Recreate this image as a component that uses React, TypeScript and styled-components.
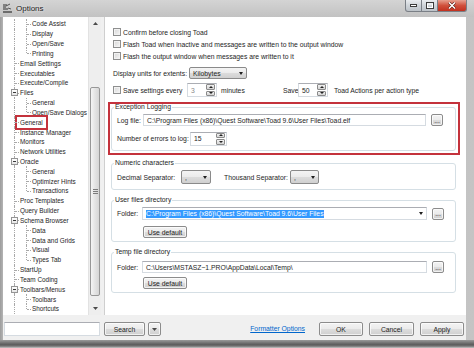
import styled, { createGlobalStyle, css } from "styled-components";

const GlobalStyle = createGlobalStyle`
  html, body {
    margin: 0;
    padding: 0;
    background: #bdbdbd;
  }
  body {
    font-family: "Liberation Sans", Arial, sans-serif;
    font-size: 6.8px;
    color: #1e1e1e;
  }
  * {
    box-sizing: border-box;
  }
`;

const Window = styled.div`
  width: 474px;
  height: 348px;
  display: flex;
  flex-direction: column;
  overflow: hidden;
  background: linear-gradient(90deg, #9c9c9c 0, #b4b4b4 3px, #c4c4c4 100%);
`;

const TitleBar = styled.div`
  height: 17px;
  flex: none;
  display: flex;
  align-items: flex-start;
  background: linear-gradient(#d4d4d4, #c2c2c2);
`;

const AppIcon = styled.svg`
  flex: none;
  margin: 3px 0 0 2px;
`;

const TitleText = styled.span`
  margin: 4px 0 0 3px;
  font-size: 8px;
  line-height: 9px;
  color: #1b1b1b;
  text-shadow: 0 0 3px rgba(255, 255, 255, 0.9);
`;

const Controls = styled.div`
  display: flex;
  margin: 0 7px 0 auto;
`;

const CtrlButton = styled.div<{ $w: number; $close?: boolean }>`
  width: ${(p) => p.$w}px;
  height: 12px;
  display: flex;
  align-items: center;
  justify-content: center;
  border: 1px solid #7a7f86;
  border-top: none;
  margin-left: -1px;
  ${(p) =>
    p.$close
      ? css`
          background: linear-gradient(#e7a08f, #d0503c 50%, #c2301f);
          border-radius: 0 0 3px 0;
        `
      : css`
          background: linear-gradient(#e9ecef, #cfd4d9 50%, #bcc2c8);
        `}
  &:first-child {
    border-radius: 0 0 0 3px;
  }
`;

const Client = styled.div`
  flex: 1;
  display: flex;
  flex-direction: column;
  margin: 0 8px 0 3px;
  background: #f0f0f0;
`;

const MainRow = styled.div`
  height: 298px;
  flex: none;
  display: flex;
  gap: 3px;
`;

const TreePanel = styled.div`
  width: 98px;
  flex: none;
  display: flex;
  background: #fff;
`;

const TreeList = styled.div`
  flex: 1;
  padding-top: 2px;
  overflow: hidden;
  font-size: 6.4px;
`;

const TreeRow = styled.div`
  height: 9.83px;
  display: flex;
  align-items: center;
  padding-left: 5px;
  white-space: nowrap;
`;

const Guide = styled.span<{ $line: "full" | "top"; $branch?: boolean }>`
  position: relative;
  flex: none;
  width: 12px;
  height: 100%;
  &::before {
    content: "";
    position: absolute;
    left: 6px;
    top: 0;
    height: ${(p) => (p.$line === "top" ? "50%" : "100%")};
    border-left: 1px dotted #a8a8a8;
  }
  &::after {
    content: "";
    display: ${(p) => (p.$branch ? "block" : "none")};
    position: absolute;
    left: 7px;
    top: 50%;
    width: 4px;
    border-top: 1px dotted #a8a8a8;
  }
`;

const Expander = styled.span`
  position: absolute;
  z-index: 1;
  left: 3px;
  top: 50%;
  width: 7px;
  height: 7px;
  margin-top: -3.5px;
  border: 1px solid #959595;
  background: linear-gradient(#ffffff, #e6e6e6);
  &::after {
    content: "";
    position: absolute;
    left: 1px;
    right: 1px;
    top: 2px;
    border-top: 1px solid #3a3a3a;
  }
`;

const NodeLabel = styled.span<{ $selected?: boolean }>`
  line-height: 9px;
  ${(p) =>
    p.$selected &&
    css`
      margin-left: -3px;
      padding: 1px 3px;
      outline: 2px solid #c4323c;
    `}
`;

const ScrollBar = styled.div`
  width: 13px;
  flex: none;
  display: flex;
  flex-direction: column;
  background: #eeeeee;
  border-left: 1px solid #e2e2e2;
`;

const ScrollArrow = styled.div<{ $bottom?: boolean }>`
  height: 13px;
  flex: none;
  display: flex;
  align-items: center;
  justify-content: center;
  margin-top: ${(p) => (p.$bottom ? "auto" : "0")};
`;

const ScrollThumb = styled.div`
  margin: 57px 1px 0;
  height: 209px;
  display: flex;
  flex-direction: column;
  align-items: center;
  justify-content: center;
  gap: 1px;
  border: 1px solid #979797;
  border-radius: 2px;
  background: linear-gradient(90deg, #f5f5f5, #e4e4e4 50%, #d6d6d6);
  span {
    width: 5px;
    border-top: 1px solid #7c7c7c;
  }
`;

const RightPanel = styled.div`
  flex: 1;
  padding: 9px 6px 0 3px;
  background: #fff;
  border-left: 1px solid #cfcfcf;
  white-space: nowrap;
`;

const CheckRow = styled.div<{ $mt?: number }>`
  height: ${(p) => (p.$mt ? 14 : 12)}px;
  margin-top: ${(p) => p.$mt ?? 0}px;
  display: flex;
  align-items: center;
  padding-left: 5px;
`;

const CheckBox = styled.span`
  width: 8px;
  height: 8px;
  flex: none;
  margin-right: 2px;
  border: 1px solid #8e8f8f;
  background: linear-gradient(135deg, #d6d6d6, #f7f7f7);
  box-shadow: inset 0 0 0 1px #f2f2f2;
`;

const FormRow = styled.div<{ $mt: number; $h: number; $pl?: number }>`
  height: ${(p) => p.$h}px;
  margin-top: ${(p) => p.$mt}px;
  padding-left: ${(p) => p.$pl ?? 0}px;
  display: flex;
  align-items: center;
`;

const FieldLabel = styled.span<{ $w?: number; $ml?: number }>`
  flex: none;
  width: ${(p) => (p.$w ? `${p.$w}px` : "auto")};
  margin-left: ${(p) => p.$ml ?? 0}px;
`;

const TextField = styled.div<{ $w: number; $h: number }>`
  width: ${(p) => p.$w}px;
  height: ${(p) => p.$h}px;
  flex: none;
  display: flex;
  align-items: center;
  padding-left: 3px;
  overflow: hidden;
  border: 1px solid #d5dbe1;
  border-top-color: #abadb3;
  background: #fff;
`;

const Selected = styled.span`
  background: #3399ff;
  color: #fff;
  line-height: 8px;
`;

const ComboArrow = styled.span`
  margin-left: auto;
  margin-right: 3px;
  width: 0;
  height: 0;
  border-left: 2.5px solid transparent;
  border-right: 2.5px solid transparent;
  border-top: 3px solid #1e1e1e;
`;

const DropList = styled.div<{ $w: number; $h: number }>`
  width: ${(p) => p.$w}px;
  height: ${(p) => p.$h}px;
  flex: none;
  display: flex;
  align-items: center;
  padding-left: 3px;
  border: 1px solid #8a8a8a;
  border-radius: 2px;
  background: linear-gradient(#f4f4f4, #ebebeb 50%, #dcdcdc 51%, #d0d0d0);
`;

const SpinBox = styled.div<{ $w: number; $muted?: boolean }>`
  width: ${(p) => p.$w}px;
  height: 14px;
  flex: none;
  display: flex;
  align-items: center;
  padding-left: 3px;
  border: 1px solid #d5dbe1;
  border-top-color: #abadb3;
  background: #fff;
  color: ${(p) => (p.$muted ? "#8a8a8a" : "#1e1e1e")};
`;

const SpinButtons = styled.div`
  margin-left: auto;
  width: 9px;
  height: 12px;
  display: flex;
  flex-direction: column;
  gap: 1px;
  margin-right: 1px;
`;

const SpinHalf = styled.span<{ $down?: boolean }>`
  flex: 1;
  display: flex;
  align-items: center;
  justify-content: center;
  border: 1px solid #8a8a8a;
  border-radius: 1px;
  background: linear-gradient(#f2f2f2, #d4d4d4);
  &::after {
    content: "";
    border-left: 2px solid transparent;
    border-right: 2px solid transparent;
    ${(p) =>
      p.$down
        ? css`
            border-top: 2px solid #222;
          `
        : css`
            border-bottom: 2px solid #222;
          `}
  }
`;

const PushButton = styled.div<{ $w: number; $h: number; $ml?: number }>`
  width: ${(p) => p.$w}px;
  height: ${(p) => p.$h}px;
  margin-left: ${(p) => p.$ml ?? 0}px;
  flex: none;
  display: flex;
  align-items: center;
  justify-content: center;
  border: 1px solid #8c8c8c;
  border-radius: 2px;
  background: linear-gradient(#f3f3f3, #ebebeb 50%, #dddddd 51%, #cfcfcf);
  box-shadow: inset 0 0 0 1px rgba(255, 255, 255, 0.7);
  color: #1e1e1e;
`;

const Highlight = styled.div`
  margin-top: 5px;
  padding: 0 2px 2px 1px;
  border: 2px solid #c4323c;
`;

const Group = styled.fieldset<{ $mt: number; $pb: number; $inner?: boolean }>`
  min-width: 0;
  margin: ${(p) => p.$mt}px ${(p) => (p.$inner ? 0 : 4)}px 0
    ${(p) => (p.$inner ? 0 : 3)}px;
  padding: 0 5px ${(p) => p.$pb}px 5px;
  border: 1px solid #d5dfe5;
  border-radius: 3px;
`;

const Legend = styled.legend`
  margin-left: -3px;
  padding: 0 1px;
  line-height: 8px;
  font-size: 6.8px;
`;

const BottomBar = styled.div`
  height: 25px;
  flex: none;
  display: flex;
  align-items: flex-start;
  padding: 7px 2px 0 1px;
`;

const LinkText = styled.span`
  margin-left: auto;
  margin-top: 3px;
  color: #0066cc;
  text-decoration: underline;
`;

const FrameBottom = styled.div`
  height: 8px;
  flex: none;
  background: linear-gradient(#9a9a9a, #5e5e5e 55%, #707070 75%, #c6c6c6);
`;

type Node = {
  label: string;
  level: 1 | 2;
  lastChild?: boolean;
  expander?: boolean;
  selected?: boolean;
};

const nodes: Node[] = [
  { label: "Code Assist", level: 2 },
  { label: "Display", level: 2 },
  { label: "Open/Save", level: 2 },
  { label: "Printing", level: 2, lastChild: true },
  { label: "Email Settings", level: 1 },
  { label: "Executables", level: 1 },
  { label: "Execute/Compile", level: 1 },
  { label: "Files", level: 1, expander: true },
  { label: "General", level: 2 },
  { label: "Open/Save Dialogs", level: 2, lastChild: true },
  { label: "General", level: 1, selected: true },
  { label: "Instance Manager", level: 1 },
  { label: "Monitors", level: 1 },
  { label: "Network Utilities", level: 1 },
  { label: "Oracle", level: 1, expander: true },
  { label: "General", level: 2 },
  { label: "Optimizer Hints", level: 2 },
  { label: "Transactions", level: 2, lastChild: true },
  { label: "Proc Templates", level: 1 },
  { label: "Query Builder", level: 1 },
  { label: "Schema Browser", level: 1, expander: true },
  { label: "Data", level: 2 },
  { label: "Data and Grids", level: 2 },
  { label: "Visual", level: 2 },
  { label: "Types Tab", level: 2, lastChild: true },
  { label: "StartUp", level: 1 },
  { label: "Team Coding", level: 1 },
  { label: "Toolbars/Menus", level: 1, expander: true },
  { label: "Toolbars", level: 2 },
  { label: "Shortcuts", level: 2, lastChild: true },
];

const Triangle = ({ down }: { down?: boolean }) => (
  <svg width="5" height="3" viewBox="0 0 5 3">
    <path d={down ? "M0 0h5L2.5 3z" : "M0 3h5L2.5 0z"} fill="#4a4a4a" />
  </svg>
);

const Spin = ({ value, w, muted }: { value: string; w: number; muted?: boolean }) => (
  <SpinBox $w={w} $muted={muted}>
    {value}
    <SpinButtons>
      <SpinHalf />
      <SpinHalf $down />
    </SpinButtons>
  </SpinBox>
);

const Dots = () => (
  <PushButton $w={12} $h={12} $ml={5}>
    ...
  </PushButton>
);

export default function App() {
  return (
    <>
      <GlobalStyle />
      <Window>
        <TitleBar>
          <AppIcon width="11" height="11" viewBox="0 0 11 11">
            <path d="M1 2h4M1 4h3M1 6h5" stroke="#333" strokeWidth="1" />
            <path d="M4 3l4-2M6 5l3 1" stroke="#555" strokeWidth="1" />
            <rect x="1" y="8" width="9" height="2" fill="#6c6c6c" />
          </AppIcon>
          <TitleText>Options</TitleText>
          <Controls>
            <CtrlButton $w={17}>
              <svg width="7" height="3" viewBox="0 0 7 3">
                <rect x="0.5" y="0.5" width="6" height="2" fill="#fff" stroke="#3c3c3c" />
              </svg>
            </CtrlButton>
            <CtrlButton $w={17}>
              <svg width="8" height="7" viewBox="0 0 8 7">
                <rect x="0.5" y="0.5" width="7" height="6" fill="none" stroke="#3c3c3c" />
                <rect x="1.5" y="2" width="5" height="3.5" fill="none" stroke="#fff" />
              </svg>
            </CtrlButton>
            <CtrlButton $w={30} $close>
              <svg width="8" height="7" viewBox="0 0 8 7">
                <path d="M1 0.5l6 6M7 0.5l-6 6" stroke="#5a1a12" strokeWidth="2.6" />
                <path d="M1 0.5l6 6M7 0.5l-6 6" stroke="#fff" strokeWidth="1.5" />
              </svg>
            </CtrlButton>
          </Controls>
        </TitleBar>

        <Client>
          <MainRow>
            <TreePanel>
              <TreeList>
                {nodes.map((n, i) => (
                  <TreeRow key={i}>
                    {n.level === 2 && <Guide $line="full" />}
                    <Guide
                      $line={n.level === 2 && n.lastChild ? "top" : "full"}
                      $branch
                    >
                      {n.expander && <Expander />}
                    </Guide>
                    <NodeLabel $selected={n.selected}>{n.label}</NodeLabel>
                  </TreeRow>
                ))}
              </TreeList>
              <ScrollBar>
                <ScrollArrow>
                  <Triangle />
                </ScrollArrow>
                <ScrollThumb>
                  <span />
                  <span />
                  <span />
                </ScrollThumb>
                <ScrollArrow $bottom>
                  <Triangle down />
                </ScrollArrow>
              </ScrollBar>
            </TreePanel>

            <RightPanel>
              <CheckRow>
                <CheckBox />
                Confirm before closing Toad
              </CheckRow>
              <CheckRow>
                <CheckBox />
                Flash Toad when inactive and messages are written to the output window
              </CheckRow>
              <CheckRow>
                <CheckBox />
                Flash the output window when messages are written to it
              </CheckRow>

              <FormRow $mt={5} $h={12} $pl={5}>
                <FieldLabel $w={76}>Display units for extents:</FieldLabel>
                <DropList $w={58} $h={12}>
                  Kilobytes
                  <ComboArrow />
                </DropList>
              </FormRow>

              <CheckRow $mt={4}>
                <CheckBox />
                <FieldLabel $w={64}>Save settings every</FieldLabel>
                <Spin value="3" w={30} muted />
                <FieldLabel $w={62} $ml={4}>
                  minutes
                </FieldLabel>
                <FieldLabel $w={15}>Save</FieldLabel>
                <Spin value="50" w={30} />
                <FieldLabel $ml={6}>Toad Actions per action type</FieldLabel>
              </CheckRow>

              <Highlight>
                <Group $mt={-1} $pb={5} $inner>
                  <Legend>Exception Logging</Legend>
                  <FormRow $mt={3} $h={12}>
                    <FieldLabel $w={26}>Log file:</FieldLabel>
                    <TextField $w={283} $h={12}>
                      {"C:\\Program Files (x86)\\Quest Software\\Toad 9.6\\User Files\\Toad.elf"}
                    </TextField>
                    <Dots />
                  </FormRow>
                  <FormRow $mt={6} $h={13}>
                    <FieldLabel $w={73}>Number of errors to log:</FieldLabel>
                    <Spin value="15" w={37} />
                  </FormRow>
                </Group>
              </Highlight>

              <Group $mt={4} $pb={5}>
                <Legend>Numeric characters</Legend>
                <FormRow $mt={3} $h={14}>
                  <FieldLabel $w={64}>Decimal Separator:</FieldLabel>
                  <DropList $w={30} $h={14}>
                    ,
                    <ComboArrow />
                  </DropList>
                  <FieldLabel $w={66} $ml={13}>
                    Thousand Separator:
                  </FieldLabel>
                  <DropList $w={29} $h={14}>
                    ,
                    <ComboArrow />
                  </DropList>
                </FormRow>
              </Group>

              <Group $mt={6} $pb={3}>
                <Legend>User files directory</Legend>
                <FormRow $mt={3} $h={13}>
                  <FieldLabel $w={25}>Folder:</FieldLabel>
                  <TextField $w={285} $h={13}>
                    <Selected>
                      {"C:\\Program Files (x86)\\Quest Software\\Toad 9.6\\User Files"}
                    </Selected>
                    <ComboArrow />
                  </TextField>
                  <Dots />
                </FormRow>
                <FormRow $mt={6} $h={12}>
                  <PushButton $w={44} $h={12} $ml={26}>
                    Use default
                  </PushButton>
                </FormRow>
              </Group>

              <Group $mt={6} $pb={3}>
                <Legend>Temp file directory</Legend>
                <FormRow $mt={5} $h={12}>
                  <FieldLabel $w={25}>Folder:</FieldLabel>
                  <TextField $w={285} $h={12}>
                    {"C:\\Users\\MSTASZ~1.PRO\\AppData\\Local\\Temp\\"}
                  </TextField>
                  <Dots />
                </FormRow>
                <FormRow $mt={4} $h={12}>
                  <PushButton $w={44} $h={12} $ml={26}>
                    Use default
                  </PushButton>
                </FormRow>
              </Group>
            </RightPanel>
          </MainRow>

          <BottomBar>
            <TextField $w={96} $h={14} />
            <PushButton $w={41} $h={14} $ml={4}>
              Search
            </PushButton>
            <PushButton $w={13} $h={14} $ml={3}>
              <Triangle down />
            </PushButton>
            <LinkText>Formatter Options</LinkText>
            <PushButton $w={44} $h={14} $ml={14}>
              OK
            </PushButton>
            <PushButton $w={45} $h={14} $ml={6}>
              Cancel
            </PushButton>
            <PushButton $w={44} $h={14} $ml={6}>
              Apply
            </PushButton>
          </BottomBar>
        </Client>
        <FrameBottom />
      </Window>
    </>
  );
}
